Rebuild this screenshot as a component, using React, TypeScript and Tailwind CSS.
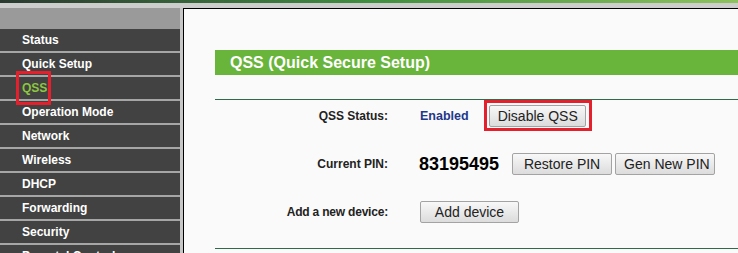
const menu = [
  'Status',
  'Quick Setup',
  'QSS',
  'Operation Mode',
  'Network',
  'Wireless',
  'DHCP',
  'Forwarding',
  'Security',
  'Parental Controls',
];

function Btn({ label, className = '' }: { label: string; className?: string }) {
  return (
    <button
      className={`h-[22px] px-[8px] whitespace-nowrap text-[14px] leading-none text-[#222] bg-gradient-to-b from-[#f8f8f8] to-[#dcdcdc] border border-[#a3a3a3] rounded-[2px] ${className}`}
    >
      {label}
    </button>
  );
}

export default function App() {
  return (
    <div className="w-[738px] h-[253px] overflow-hidden bg-[#fafafa] font-['Liberation_Sans',Arial,sans-serif]">
      <div className="h-[3px] bg-gradient-to-r from-[#2b3a30] via-[#3f8d3f] to-[#8cc25e]" />
      <div className="h-[5px] bg-[#cdcdcd]" />
      <div className="flex h-[245px]">
        <div className="w-[180px] shrink-0 flex flex-col gap-[2px] bg-[#a6a6a6]">
          <div className="h-[21px] shrink-0 -mb-[2px] bg-[#9a9a9a]" />
          {menu.map((m) => (
            <div key={m} className="h-[22px] shrink-0 bg-[#424242] flex items-center pl-[22px] text-[12px] font-bold text-white whitespace-nowrap">
              {m === 'QSS' ? (
                <span className="relative text-[#8dc63f]">
                  QSS
                  <span className="absolute -left-[6px] -right-[4px] -top-[8px] -bottom-[8px] border-[3px] border-[#e3202b]" />
                </span>
              ) : (
                m
              )}
            </div>
          ))}
        </div>
        <div className="w-[3px] shrink-0 bg-[#c6c6c6]" />
        <div className="flex-1 border-l border-t border-black bg-[#fafafa] pl-[31px] pt-[41px]">
          <div className="h-[25px] bg-[#69b43b] flex items-center pl-[15px] text-[16px] font-bold text-white">
            QSS (Quick Secure Setup)
          </div>
          <div className="mt-[24px] h-px bg-[#2f6b4b]" />
          <div className="pt-[4px] flex flex-col gap-[24px]">
            <div className="h-[24px] flex items-center">
              <div className="w-[173px] text-right text-[12px] font-bold text-[#222]">QSS Status:</div>
              <div className="ml-[32px] text-[12.5px] font-bold text-[#23378a]">Enabled</div>
              <span className="relative ml-[20px] flex">
                <Btn label="Disable QSS" className="w-[97px]" />
                <span className="absolute -left-[5px] -right-[6px] -top-[5px] -bottom-[4px] border-[3px] border-[#e3202b]" />
              </span>
            </div>
            <div className="h-[24px] flex items-center">
              <div className="w-[173px] text-right text-[12px] font-bold text-[#222]">Current PIN:</div>
              <div className="ml-[31px] text-[18px] font-bold text-black">83195495</div>
              <Btn label="Restore PIN" className="ml-[13px] w-[100px]" />
              <Btn label="Gen New PIN" className="ml-[3px] w-[100px]" />
            </div>
            <div className="h-[24px] flex items-center">
              <div className="w-[173px] text-right text-[12px] font-bold text-[#222] tracking-[-0.2px]">Add a new device:</div>
              <Btn label="Add device" className="ml-[32px] w-[99px]" />
            </div>
          </div>
          <div className="mt-[24px] h-px bg-[#2f6b4b]" />
        </div>
      </div>
    </div>
  );
}
